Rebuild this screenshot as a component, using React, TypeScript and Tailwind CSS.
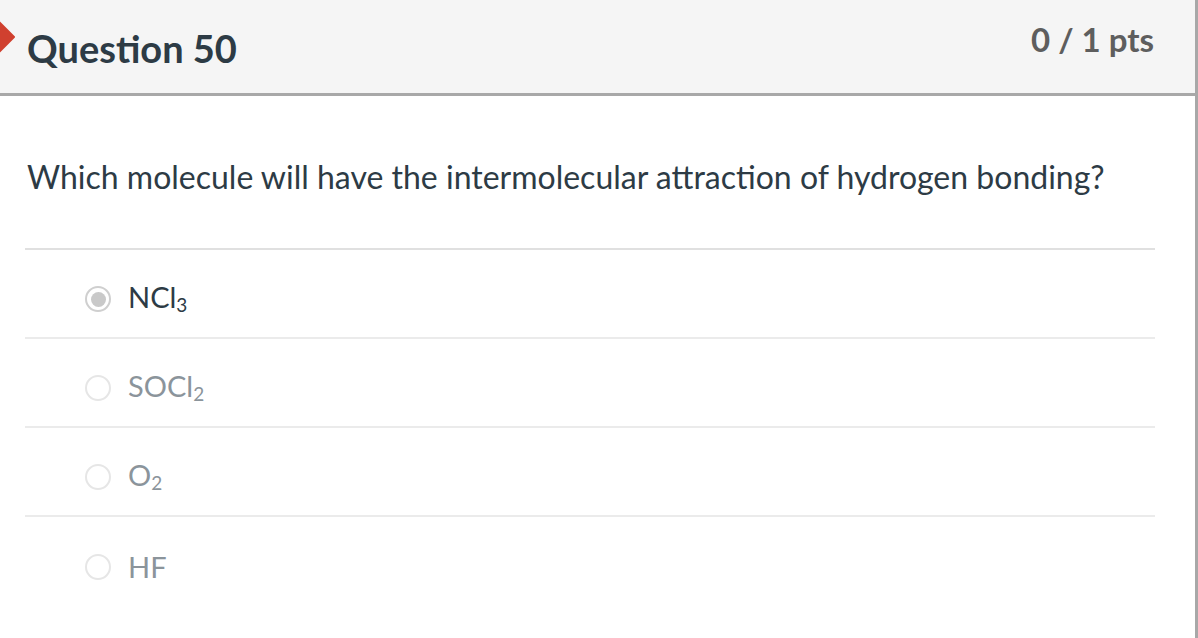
interface Answer {
  id: string;
  label: string;
  sub?: string;
  selected?: boolean;
}

const answers: Answer[] = [
  { id: 'a1', label: 'NCl', sub: '3', selected: true },
  { id: 'a2', label: 'SOCl', sub: '2' },
  { id: 'a3', label: 'O', sub: '2' },
  { id: 'a4', label: 'HF' },
];

function Radio({ selected }: { selected?: boolean }) {
  return (
    <span
      className={`flex h-[26px] w-[26px] shrink-0 items-center justify-center rounded-full border-2 bg-white ${
        selected ? 'border-[#cfcfcf]' : 'border-[#e6e6e6]'
      }`}
    >
      {selected && <span className="h-[15px] w-[15px] rounded-full bg-[#c9c9c9]" />}
    </span>
  );
}

export default function App() {
  return (
    <div className="min-h-[638px] w-[1198px] bg-white font-['Lato','Liberation_Sans',sans-serif]">
      <div className="relative min-h-[638px] border-r-[3px] border-[#a8a8a8]">
        <div className="relative flex h-[96px] items-start justify-between border-b-[3px] border-[#a8a8a8] bg-[#f5f5f5] pl-[27px] pr-[41px]">
          <svg className="absolute left-0 top-[15px]" width="16" height="44" viewBox="0 0 16 44">
            <polygon points="-8,0 14,22 -8,44" fill="#d0402f" stroke="#d0402f" strokeWidth="2" strokeLinejoin="round" />
          </svg>
          <h2 className="pt-[29px] text-[38px] font-bold leading-[38px] text-[#2d3b45]">Question 50</h2>
          <div className="pt-[23px] text-[33px] font-bold leading-[33px] text-[#5e5e5e]">0 / 1 pts</div>
        </div>

        <div className="pl-[25px] pr-[40px]">
          <p className="pl-[2px] pt-[65px] text-[32px] leading-[32px] text-[#2d3b45]">
            Which molecule will have the intermolecular attraction of hydrogen bonding?
          </p>
          <div className="mt-[55px] border-t-2 border-[#e0e0e0]">
            {answers.map((a, i) => (
              <div
                key={a.id}
                className={`flex h-[89px] items-center gap-[17px] pl-[60px] pt-[11px] ${
                  i < answers.length - 1 ? 'border-b-2 border-[#ebebeb]' : ''
                }`}
              >
                <Radio selected={a.selected} />
                <span
                  className={`text-[29px] leading-[30px] ${a.selected ? 'text-[#2d3b45]' : 'text-[#8b949b]'}`}
                >
                  {a.label}
                  {a.sub && <span className="relative top-[4px] text-[19px]">{a.sub}</span>}
                </span>
              </div>
            ))}
          </div>
        </div>
      </div>
    </div>
  );
}
